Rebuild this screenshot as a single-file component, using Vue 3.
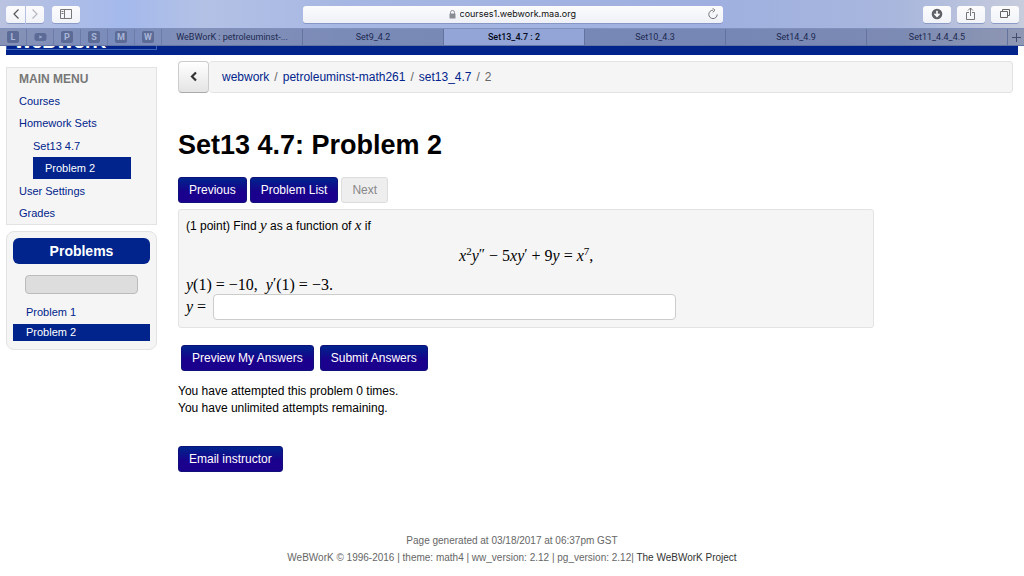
<script setup>
import { ref } from 'vue'

const pinned = ['L', 'play', 'P', 'S', 'M', 'W']
const tabs = [
  { title: 'WeBWorK : petroleuminst-...' },
  { title: 'Set9_4.2' },
  { title: 'Set13_4.7 : 2', active: true },
  { title: 'Set10_4.3' },
  { title: 'Set14_4.9' },
  { title: 'Set11_4.4_4.5' },
]
const answer = ref('')
const address = ref('courses1.webwork.maa.org')
</script>

<template>
  <div class="window">
    <header class="chrome">
      <div class="toolbar">
        <div class="tools">
          <div class="pair">
            <button class="tool back" aria-label="Back">
              <svg width="8" height="12" viewBox="0 0 8 12"><path d="M6.5 1.5 2 6l4.500 4.500" fill="none" stroke="#555" stroke-width="1.200" /></svg>
            </button>
            <button class="tool forward" aria-label="Forward">
              <svg width="8" height="12" viewBox="0 0 8 12"><path d="M1.500 1.500 6 6l-4.500 4.500" fill="none" stroke="#b5b8c0" stroke-width="1.200" /></svg>
            </button>
          </div>
          <button class="tool wide" aria-label="Show sidebar">
            <svg width="12" height="10" viewBox="0 0 12 10"><path d="M.5.5h11v9H.5zM4.500.5v9M1.500 2.500h2M1.500 4.500h2" fill="none" stroke="#777" /></svg>
          </button>
        </div>
        <div class="address">
          <svg class="lock" width="7" height="9" viewBox="0 0 7 9"><path d="M1.500 4V2.500a2 2 0 0 1 4 0V4" fill="none" stroke="#8b8d94" /><rect x="0.500" y="3.500" width="6" height="5" rx=".5" fill="#8b8d94" /></svg>
          <input v-model="address" class="url" aria-label="Address" />
          <button class="reload" aria-label="Reload">
            <svg width="12" height="12" viewBox="0 0 12 12"><path d="M6 2.200A4.200 4.200 0 1 0 10.200 6.400M5.500.2 8 2.200 5.700 4.400" fill="none" stroke="#777" /></svg>
          </button>
        </div>
        <div class="tools right">
          <button class="tool wide" aria-label="Downloads">
            <svg width="12" height="12" viewBox="0 0 12 12"><circle cx="6" cy="6" r="5.300" fill="#606166" /><path d="M6 2.800v5M3.500 5.800 6 8.300l2.500-2.500" fill="none" stroke="#fff" stroke-width="1.600" /></svg>
          </button>
          <button class="tool wide" aria-label="Share">
            <svg width="12" height="14" viewBox="0 0 12 14"><path d="M4 5.500H1.500v7h8v-7H7M5.500 9V1M3 3.500 5.500 1 8 3.500" fill="none" stroke="#666" stroke-width=".9" /></svg>
          </button>
          <button class="tool wide" aria-label="Show all tabs">
            <svg width="12" height="12" viewBox="0 0 12 12"><path d="M3.500 3V1.500h7v6H8.500M1.500 3.500h7v6h-7z" fill="none" stroke="#666" /></svg>
          </button>
        </div>
      </div>
      <nav class="tabbar" aria-label="Tabs">
        <button v-for="p in pinned" :key="p" class="pin" :aria-label="p">
          <svg v-if="p === 'play'" width="13" height="10" viewBox="0 0 13 10"><rect x=".5" y="1" width="12" height="8" rx="2.500" fill="#5c6b96" /><path d="M5.300 3.200v3.600L8.500 5z" fill="#98a6cc" /></svg>
          <span v-else class="letter">{{ p }}</span>
        </button>
        <button v-for="t in tabs" :key="t.title" class="tab" :class="{ active: t.active }">{{ t.title }}</button>
        <button class="plus" aria-label="New tab">
          <svg width="9" height="9" viewBox="0 0 9 9"><path d="M4.500 0v9M0 4.500h9" stroke="#424d6d" /></svg>
        </button>
      </nav>
    </header>

    <div class="masthead"><a href="#" class="logo">WeBWorK</a></div>

    <div class="body">
      <aside class="side">
        <nav class="menu" aria-label="Main menu">
          <h2>MAIN MENU</h2>
          <a href="#">Courses</a>
          <a href="#">Homework Sets</a>
          <div class="sub">
            <a href="#">Set13 4.7</a>
            <a href="#" class="current">Problem 2</a>
          </div>
          <a href="#">User Settings</a>
          <a href="#">Grades</a>
        </nav>
        <section class="problems">
          <h2>Problems</h2>
          <div class="progress"></div>
          <a href="#">Problem 1</a>
          <a href="#" class="selected">Problem 2</a>
        </section>
      </aside>

      <main class="content">
        <div class="crumbrow">
          <button class="up" aria-label="Back">
            <svg width="8" height="12" viewBox="0 0 8 12"><path d="M6 1.500 2 5.500l4 4" fill="none" stroke="#333" stroke-width="2.200" /></svg>
          </button>
          <nav class="crumbs" aria-label="Breadcrumb">
            <a href="#">webwork</a><i>/</i><a href="#">petroleuminst-math261</a><i>/</i><a href="#">set13_4.7</a><i>/</i><span>2</span>
          </nav>
        </div>

        <h1>Set13 4.7: Problem 2</h1>

        <div class="nav">
          <button class="btn">Previous</button>
          <button class="btn">Problem List</button>
          <button class="btn off" disabled>Next</button>
        </div>

        <section class="problem">
          <p>(1 point) Find <span class="math"><em>y</em></span> as a function of <span class="math"><em>x</em></span> if</p>
          <p class="display math"><em>x</em><sup>2</sup><em>y</em><sup class="prime">″</sup> − 5<em>xy</em><sup class="prime">′</sup> + 9<em>y</em> = <em>x</em><sup>7</sup>,</p>
          <p class="math initial"><em>y</em>(1) = −10,&ensp;<em>y</em><sup class="prime">′</sup>(1) = −3.</p>
          <div class="answer">
            <label for="answer" class="math"><em>y</em> =</label>
            <input id="answer" v-model="answer" type="text" />
          </div>
        </section>

        <div class="submit">
          <button class="btn">Preview My Answers</button>
          <button class="btn">Submit Answers</button>
        </div>

        <p class="attempts">You have attempted this problem 0 times.<br />You have unlimited attempts remaining.</p>
        <button class="btn">Email instructor</button>
      </main>
    </div>

    <footer class="foot">
      <div>Page generated at 03/18/2017 at 06:37pm GST</div>
      <div>WeBWorK © 1996-2016 | theme: math4 | ww_version: 2.12 | pg_version: 2.12| <a href="#">The WeBWorK Project</a></div>
    </footer>
  </div>
</template>

<style>
body {
  background: #fff;
}
</style>

<style scoped>
.window {
  font: 12px/17px "Liberation Sans", Arial, sans-serif;
  color: #000;
  overflow: hidden;
}
* {
  box-sizing: border-box;
}
button,
input {
  font: inherit;
  border: 0;
  padding: 0;
}
a {
  color: #00248c;
  text-decoration: none;
}
h1,
h2,
p {
  margin: 0;
}

.chrome {
  background: linear-gradient(90deg, #bac3e0 0, #a4b9ec 12%, #b3c1e5 20%, #a6b7e3 34%, #9fb0e0 70%, #a9b7dd 88%, #c8cddd 100%);
}
.toolbar {
  display: grid;
  grid-template-columns: 1fr 420px 1fr;
  align-items: center;
  height: 28px;
  padding: 0 5px 0 6px;
}
.tools {
  display: flex;
  gap: 8px;
}
.right {
  justify-content: flex-end;
  gap: 6px;
}
.pair {
  display: flex;
  gap: 1px;
}
.tool {
  display: flex;
  align-items: center;
  justify-content: center;
  width: 19px;
  height: 17px;
  border-radius: 3px;
  background: linear-gradient(#fcfcfd, #f1f3f8);
  box-shadow: 0 1px 0 #8c9bc5;
}
.back {
  border-radius: 3px 0 0 3px;
}
.forward {
  width: 18px;
  border-radius: 0 3px 3px 0;
}
.wide {
  width: 28px;
}
.address {
  display: flex;
  align-items: center;
  height: 17px;
  padding-right: 4px;
  border-radius: 3px;
  background: linear-gradient(#fcfcfd, #eff1f7);
  box-shadow: 0 1px 0 #8797c5;
  font-family: Inter, "Liberation Sans", sans-serif;
  font-size: 9px;
  line-height: 16px;
}
.lock {
  flex: none;
  margin-left: 146px;
}
.url {
  flex: 1;
  min-width: 0;
  margin-left: 4px;
  background: none;
  color: #111;
}
.reload {
  display: flex;
  background: none;
}

.tabbar {
  display: flex;
  height: 18px;
  background: #39487666;
  border-top: 1px solid #8090bc;
  border-bottom: 1px solid #6474a3;
}
.pin {
  display: flex;
  align-items: center;
  justify-content: center;
  width: 27px;
  background: none;
  border-right: 1px solid #6c7ba8;
}
.letter {
  width: 12px;
  border-radius: 2px;
  background: #5c6b96;
  color: #a9b6d8;
  font: bold 9px/12px Roboto, "Liberation Sans", sans-serif;
  text-align: center;
}
.tab {
  flex: 1;
  min-width: 0;
  background: none;
  border-right: 1px solid #63729f;
  color: #1c2950;
  font: 9px/15px Roboto, "Liberation Sans", sans-serif;
  text-align: center;
  white-space: nowrap;
}
.active {
  background: #93a5d6;
  color: #050a20;
  font-weight: 500;
}
.plus {
  display: flex;
  align-items: center;
  justify-content: center;
  width: 16px;
  background: none;
}

.masthead {
  display: flex;
  align-items: flex-end;
  height: 9px;
  margin: 0 6px;
  padding-bottom: 5px;
  background: #00248c;
  overflow: hidden;
}
.logo {
  width: 151px;
  flex: none;
  padding-left: 7px;
  border: 1px solid #3f66b8;
  color: #fff;
  font-size: 19px;
  font-weight: bold;
  line-height: 14px;
}

.body {
  display: flex;
  gap: 21px;
  padding: 6px 11px 0 6px;
}
.side {
  width: 151px;
  flex: none;
  padding-top: 6px;
}
.menu {
  display: flex;
  flex-direction: column;
  padding: 0 12px;
  background: #f5f5f5;
  border: 1px solid #e3e3e3;
  font-size: 11px;
  line-height: 22px;
}
.menu h2 {
  font-size: 12px;
  line-height: 22px;
  color: #777;
}
.sub {
  display: flex;
  flex-direction: column;
  padding: 1px 13px 1px 14px;
}
.current {
  padding-left: 12px;
  background: #00248c;
  color: #fff;
}
.problems {
  display: flex;
  flex-direction: column;
  margin-top: 6px;
  padding: 6px 6px 8px;
  background: #f5f5f5;
  border: 1px solid #e3e3e3;
  border-radius: 8px;
  font-size: 11px;
}
.problems h2 {
  border-radius: 6px;
  background: #00248c;
  color: #fff;
  font-size: 14px;
  line-height: 26px;
  text-align: center;
}
.progress {
  height: 19px;
  margin: 11px 12px 10px;
  border: 1px solid #bbb;
  border-radius: 4px;
  background: #ddd;
}
.problems a {
  padding-left: 13px;
  line-height: 17px;
}
.problems .selected {
  margin-top: 3px;
  background: #00248c;
  color: #fff;
}

.content {
  flex: 1;
  min-width: 0;
}
.crumbrow {
  display: flex;
}
.up {
  display: flex;
  align-items: center;
  justify-content: center;
  width: 31px;
  height: 32px;
  border: 1px solid #ccc;
  border-bottom-color: #aaa;
  border-radius: 4px;
  background: linear-gradient(#fff, #e4e4e4);
}
.crumbs {
  flex: 1;
  padding: 0 13px;
  border: 1px solid #e3e3e3;
  border-left: 0;
  border-radius: 4px;
  background: #f5f5f5;
  color: #666;
  line-height: 30px;
}
.crumbs i {
  padding: 0 5px;
  font-style: normal;
}
h1 {
  margin-top: 36px;
  font-size: 27px;
  line-height: 32px;
}
.nav {
  display: flex;
  gap: 3px;
  margin-top: 16px;
}
.btn {
  height: 26px;
  padding: 0 10px;
  border: 1px solid #10107a;
  border-radius: 3px;
  background: linear-gradient(#00248c, #1a008c 60%);
  color: #fff;
}
.off {
  border-color: #ddd;
  background: #eee;
  color: #888;
}
.problem {
  width: 83.400%;
  margin-top: 6px;
  padding: 7px;
  border: 1px solid #e3e3e3;
  border-radius: 3px;
  background: #f5f5f5;
  line-height: 18px;
}
.math {
  font-family: "Liberation Serif", "Times New Roman", serif;
  font-size: 16px;
}
span.math {
  font-size: 15px;
  line-height: 0;
}
.math sup {
  font-size: 11px;
  line-height: 0;
}
.math .prime {
  font-size: 15px;
  vertical-align: 2px;
}
.display {
  margin: 12px 0 11px;
  text-align: center;
}
.answer {
  display: flex;
  align-items: center;
  gap: 7px;
}
.answer input {
  width: 68%;
  height: 26px;
  padding: 0 6px;
  border: 1px solid #ccc;
  border-radius: 4px;
  background: #fff;
}
.submit {
  display: flex;
  gap: 6px;
  margin-top: 17px;
  padding-left: 3px;
}
.attempts {
  margin: 12px 0 29px;
}
.foot {
  margin-top: 60px;
  color: #666;
  font-size: 10px;
  text-align: center;
}
.foot a {
  color: #333;
}
</style>
